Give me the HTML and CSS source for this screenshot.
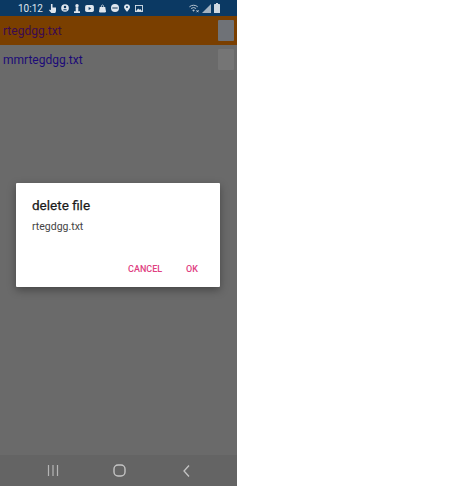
FILE: index.html
```html
<!DOCTYPE html>
<html lang="en">
<head>
    <meta charset="UTF-8">
    <title>Files</title>
    <link rel="stylesheet" href="styles.css">
</head>
<body>
    <div class="phone">
        <div class="status-bar">
            <span class="clock">10:12</span>
            <div class="status-icons">
                <svg width="7" height="9" viewBox="0 0 9 10" preserveAspectRatio="none"><path d="M2.500 0h2v4H9v4L8 10H3L0 7l1-1 1.500 1z" fill="#dfe6ee"/></svg>
                <svg width="8" height="8" viewBox="0 0 9 9"><circle cx="4.500" cy="4.500" r="4.300" fill="#dfe6ee"/><circle cx="4.500" cy="3.300" r="1.400" fill="#0b3963"/><path d="M2 7c.5-1.500 4.500-1.500 5 0z" fill="#0b3963"/></svg>
                <svg width="6" height="9" viewBox="0 0 7 10" preserveAspectRatio="none"><circle cx="3.500" cy="2" r="2" fill="#dfe6ee"/><path d="M2 3.500h3V8h2v2H0V8h2z" fill="#dfe6ee"/></svg>
                <svg width="9" height="7" viewBox="0 0 10 8"><rect width="10" height="8" rx="2" fill="#dfe6ee"/><path d="M4 2.200 7 4 4 5.800z" fill="#0b3963"/></svg>
                <svg width="7" height="9" viewBox="0 0 9 10"><path d="M1 3h7l1 6-1 1H1L0 9z" fill="#dfe6ee"/><path d="M3 3c0-3.500 3-3.500 3 0" fill="none" stroke="#dfe6ee"/></svg>
                <svg width="8" height="8" viewBox="0 0 9 9"><circle cx="4.500" cy="4.500" r="4.500" fill="#dfe6ee"/><rect x="1.500" y="3.500" width="6" height="2" fill="#6f8499"/></svg>
                <svg width="6" height="8" viewBox="0 0 7 9"><path d="M3.500 0C1.500 0 0 1.500 0 3.400 0 5.500 3.500 9 3.500 9S7 5.500 7 3.400C7 1.500 5.500 0 3.500 0z" fill="#dfe6ee"/><circle cx="3.500" cy="3.400" r="1.200" fill="#0b3963"/></svg>
                <svg width="8" height="7" viewBox="0 0 9 8"><rect x=".5" y=".5" width="8" height="7" fill="none" stroke="#dfe6ee"/><path d="M1 7l2.500-3L5 5.500 6 4.500 8 7z" fill="#dfe6ee"/></svg>
            </div>
            <div class="system-icons">
                <svg width="10" height="9" viewBox="0 0 12 10"><g fill="none" stroke="#b7c4d1" stroke-width="1.200"><path d="M.5 3a7.500 7.500 0 0 1 10 0"/><path d="M2.500 5a4.800 4.800 0 0 1 6 0"/></g><path d="M4 7a2 2 0 0 1 3 0L5.500 9z" fill="#b7c4d1"/><path d="M9 7l2.500 2.500M11.500 7 9 9.500" stroke="#dfe6ee"/></svg>
                <svg width="9" height="9" viewBox="0 0 9 9"><path d="M9 0v9H0z" fill="#a3b2c1"/></svg>
                <svg width="6" height="10" viewBox="0 0 6 10"><path d="M2 0h2v1h1.500l.5.500V10H0V1.500L.5 1H2z" fill="#cfd8e1"/></svg>
            </div>
        </div>

        <div class="file-row selected">
            <span class="file-name">rtegdgg.txt</span>
            <div class="row-button"></div>
        </div>
        <div class="file-row">
            <span class="file-name">mmrtegdgg.txt</span>
            <div class="row-button"></div>
        </div>

        <div class="nav-bar">
            <svg width="12" height="11" viewBox="0 0 12 11"><path d="M1.500 0v11M6 0v11M10.500 0v11" stroke="#b5b5b5" stroke-width="1.200"/></svg>
            <svg class="nav-home" width="13" height="13" viewBox="0 0 13 13"><rect x="1" y="1" width="11" height="11" rx="4" fill="none" stroke="#c4c4c4" stroke-width="1.400"/></svg>
            <svg width="7" height="12" viewBox="0 0 7 12"><path d="M6 .5 1 6l5 5.500" fill="none" stroke="#c4c4c4" stroke-width="1.300"/></svg>
        </div>

        <div class="dialog">
            <h2>delete file</h2>
            <p>rtegdgg.txt</p>
            <div class="dialog-actions">
                <span>CANCEL</span>
                <span>OK</span>
            </div>
        </div>
    </div>
</body>
</html>
```

FILE: styles.css
```css
body {
    margin: 0;
    background-color: #fff;
    font-family: Roboto, "Liberation Sans", sans-serif;
}
.phone {
    position: relative;
    width: 237px;
    height: 486px;
    display: flex;
    flex-direction: column;
    background-color: #6a6a6a;
    overflow: hidden;
}
.status-bar {
    height: 16px;
    display: flex;
    align-items: center;
    padding: 0 17px 0 18px;
    background-color: #0b3963;
    color: #dfe6ee;
}
.clock {
    font-size: 10px;
    margin-right: 6px;
}
.status-icons {
    display: flex;
    align-items: center;
    gap: 5px;
}
.system-icons {
    display: flex;
    align-items: center;
    gap: 3px;
    margin-left: auto;
}
.file-row {
    height: 29px;
    display: flex;
    align-items: center;
    justify-content: space-between;
    padding: 0 3px;
}
.file-row.selected {
    background-color: #7a3f00;
}
.file-name {
    font-size: 12px;
    color: #1c0a78;
}
.selected .file-name {
    color: #3a0a50;
}
.row-button {
    width: 16px;
    height: 21px;
    border-radius: 1px;
    background-color: #757575;
}
.selected .row-button {
    background-color: #6f7277;
}
.nav-bar {
    margin-top: auto;
    height: 31px;
    display: flex;
    align-items: center;
    padding: 0 47px;
    background-color: #646464;
}
.nav-home {
    margin: 0 57px 0 54px;
}
.dialog {
    position: absolute;
    left: 16px;
    top: 183px;
    width: 204px;
    height: 104px;
    box-sizing: border-box;
    padding: 14px 16px 0;
    background-color: #fff;
    border-radius: 1px;
    box-shadow: 0 3px 8px rgba(0, 0, 0, 0.35);
}
.dialog h2 {
    margin: 0;
    font-size: 13.500px;
    font-weight: 400;
    -webkit-text-stroke: 0.25px #1a1a1a;
    color: #1a1a1a;
}
.dialog p {
    margin: 7px 0 0;
    font-size: 10.500px;
    color: #444;
}
.dialog-actions {
    display: flex;
    justify-content: flex-end;
    gap: 24px;
    margin: 31px 6px 0 0;
    font-size: 9px;
    font-weight: 500;
    color: #e0407f;
}
```
